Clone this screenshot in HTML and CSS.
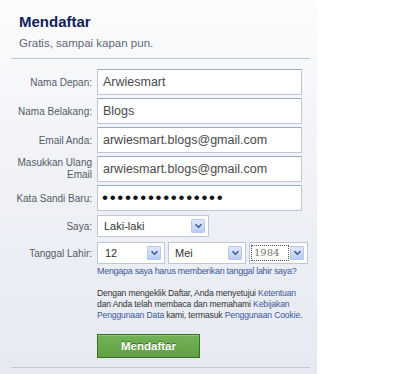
FILE: index.html
```html
<!DOCTYPE html>
<html lang="id">
<head>
<meta charset="utf-8">
<title>Mendaftar</title>
<link rel="stylesheet" href="styles.css">
</head>
<body>
<div class="panel">
  <div class="head">
    <h1 class="title">Mendaftar</h1>
    <p class="sub">Gratis, sampai kapan pun.</p>
  </div>
  <div class="rule"></div>
  <div class="form">
    <label class="lbl">Nama Depan:</label>
    <div class="inp">Arwiesmart</div>
    <label class="lbl">Nama Belakang:</label>
    <div class="inp">Blogs</div>
    <label class="lbl">Email Anda:</label>
    <div class="inp">arwiesmart.blogs@gmail.com</div>
    <label class="lbl two">Masukkan Ulang<br>Email</label>
    <div class="inp">arwiesmart.blogs@gmail.com</div>
    <label class="lbl">Kata Sandi Baru:</label>
    <div class="inp pw">&#8226;&#8226;&#8226;&#8226;&#8226;&#8226;&#8226;&#8226;&#8226;&#8226;&#8226;&#8226;&#8226;&#8226;&#8226;&#8226;</div>
    <label class="lbl sel-row">Saya:</label>
    <div class="sel-row">
      <div class="sel sex"><span class="val">Laki-laki</span><span class="btn"><svg width="9" height="6" viewBox="0 0 9 6"><path d="M1.5 1.2 L4.5 4.2 L7.5 1.2" fill="none" stroke="#3f5a8c" stroke-width="1.6"/></svg></span></div>
    </div>
    <label class="lbl date-row">Tanggal Lahir:</label>
    <div class="date-row dates">
      <div class="sel day"><span class="val">12</span><span class="btn"><svg width="9" height="6" viewBox="0 0 9 6"><path d="M1.5 1.2 L4.5 4.2 L7.5 1.2" fill="none" stroke="#3f5a8c" stroke-width="1.6"/></svg></span></div>
      <div class="sel mon"><span class="val">Mei</span><span class="btn"><svg width="9" height="6" viewBox="0 0 9 6"><path d="M1.5 1.2 L4.5 4.2 L7.5 1.2" fill="none" stroke="#3f5a8c" stroke-width="1.6"/></svg></span></div>
      <div class="sel year"><span class="val focus">1984</span><span class="btn"><svg width="9" height="6" viewBox="0 0 9 6"><path d="M1.5 1.2 L4.5 4.2 L7.5 1.2" fill="none" stroke="#3f5a8c" stroke-width="1.6"/></svg></span></div>
    </div>
    <a class="why">Mengapa saya harus memberikan tanggal lahir saya?</a>
    <p class="terms">Dengan mengeklik Daftar, Anda menyetujui <a>Ketentuan</a><br>dan Anda telah membaca dan memahami <a>Kebijakan</a><br><a>Penggunaan Data</a> kami, termasuk <a>Penggunaan Cookie</a>.</p>
    <div class="submit-wrap"><button class="submit">Mendaftar</button></div>
  </div>
  <div class="rule bottom"></div>
</div>
</body>
</html>
```
FILE: styles.css
```css
html, body {
  margin: 0;
  padding: 0;
  background: #fff;
}
body {
  font-family: "Liberation Sans", Arial, sans-serif;
  width: 400px;
  height: 374px;
  overflow: hidden;
}
.panel {
  width: 317px;
  height: 374px;
  background: linear-gradient(to bottom, #fcfcfd 0%, #f1f3f7 40%, #e6e9f2 100%);
  display: flex;
  flex-direction: column;
}
.head {
  padding: 13px 0 0 19px;
  height: 58px;
  box-sizing: border-box;
}
.title {
  margin: 0;
  font-size: 15px;
  line-height: 18px;
  font-weight: bold;
  color: #0e1f5b;
}
.sub {
  margin: 5px 0 0;
  font-size: 11.5px;
  line-height: 14px;
  color: #626777;
}
.rule {
  margin: 0 7px 0 11px;
  height: 1px;
  background: #bcc4da;
}
.rule.bottom {
  margin-top: 9px;
  background: #c3c9d9;
}
.form {
  margin-top: 10px;
  display: grid;
  grid-template-columns: 81px 212px;
  column-gap: 5px;
  row-gap: 3px;
  padding-left: 11px;
}
.lbl {
  font-size: 10px;
  color: #555a66;
  text-align: right;
  display: flex;
  align-items: center;
  justify-content: flex-end;
  white-space: nowrap;
}
.lbl.two {
  line-height: 12px;
  align-items: flex-end;
  padding-bottom: 1px;
}
.inp {
  width: 205px;
  height: 26px;
  box-sizing: border-box;
  border: 1px solid #bdc7d8;
  border-top-color: #9ea9c2;
  background: #fff;
  padding: 0 5px;
  font-size: 12.5px;
  line-height: 24px;
  color: #4a4a4a;
  white-space: nowrap;
  overflow: hidden;
}
.inp.pw {
  font-family: "Liberation Sans", Arial, sans-serif;
  font-size: 17px;
  letter-spacing: 1.7px;
  color: #111;
  padding-left: 4px;
}
.sel-row {
  margin-top: 1px;
}
.date-row {
  margin-top: 2px;
}
.dates {
  display: flex;
  gap: 3px;
}
.sel {
  height: 22px;
  box-sizing: border-box;
  border: 1px solid #bdc7d8;
  background: #fff;
  display: flex;
  align-items: center;
  justify-content: space-between;
  padding: 0 3px 0 6px;
  font-size: 11px;
  color: #333;
}
.sex { width: 112px; }
.day { width: 68px; padding-left: 7px; }
.mon { width: 78px; }
.year { width: 59px; padding-left: 3px; }
.btn {
  width: 14px;
  height: 14px;
  box-sizing: border-box;
  border: 1px solid #b6c8ee;
  background: linear-gradient(to bottom, #dfe9fb, #b9cef4);
  display: flex;
  align-items: center;
  justify-content: center;
  border-radius: 1px;
}
.focus {
  outline: 1px dotted #555;
  outline-offset: 1px;
  font-family: "DejaVu Serif", "Liberation Serif", serif;
  font-size: 10px;
  color: #777;
  padding: 0 8px 0 1px;
  line-height: 12px;
}
.why {
  grid-column: 2;
  margin-top: -1px;
  font-size: 9px;
  letter-spacing: -0.3px;
  line-height: 11px;
  color: #3b5998;
  white-space: nowrap;
}
.terms {
  grid-column: 2;
  margin: 8px 0 0;
  font-size: 8.6px;
  letter-spacing: -0.15px;
  line-height: 11px;
  color: #333;
  white-space: nowrap;
}
.terms a {
  color: #3b5998;
}
.submit-wrap {
  grid-column: 2;
  margin-top: 10px;
}
.submit {
  width: 103px;
  height: 24px;
  box-sizing: border-box;
  border: 1px solid #3b6e22;
  background: linear-gradient(to bottom, #73b257, #62a043);
  box-shadow: inset 0 1px 0 #8fc675;
  color: #fff;
  font-family: "Liberation Sans", Arial, sans-serif;
  font-size: 11.5px;
  font-weight: bold;
  text-shadow: 0 -1px 0 #3b6e22;
  padding: 0;
  cursor: pointer;
}
```
